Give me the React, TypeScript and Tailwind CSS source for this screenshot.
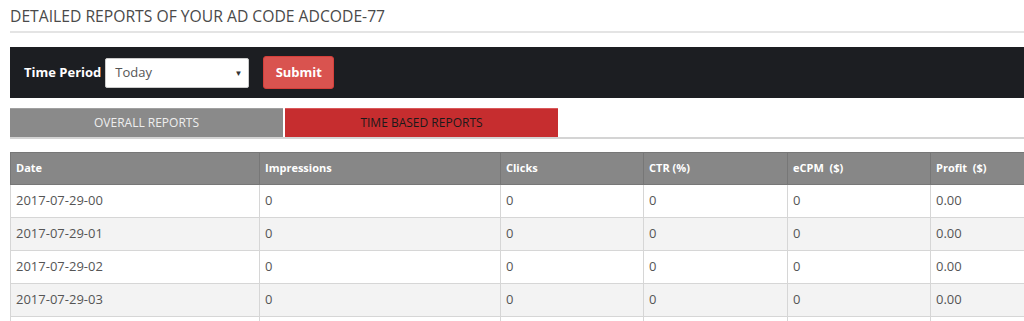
import React from 'react';

const COLUMNS = [
  { label: 'Date', width: 249 },
  { label: 'Impressions', width: 241 },
  { label: 'Clicks', width: 143 },
  { label: 'CTR (%)', width: 144 },
  { label: 'eCPM  ($)', width: 143 },
  { label: 'Profit  ($)', width: 120 },
];

const ROWS = ['00', '01', '02', '03'].map((h) => ({
  date: `2017-07-29-${h}`,
  impressions: '0',
  clicks: '0',
  ctr: '0',
  ecpm: '0',
  profit: '0.00',
}));

export default function App() {
  return (
    <div
      className="w-[1024px] h-[321px] overflow-hidden bg-white"
      style={{ fontFamily: '"Open Sans", "Liberation Sans", sans-serif' }}
    >
      <div className="pl-[10px] w-[1060px]">
        {/* Title */}
        <h2 className="pt-[6px] pb-[4px] text-[15.7px] leading-[21px] font-medium uppercase text-[#4a4a4a] border-b-2 border-[#e4e4e4]">
          Detailed reports of your ad code ADCODE-77
        </h2>

        {/* Filter bar */}
        <div className="mt-[14px] h-[51px] bg-[#1c1e22] flex items-center pl-[14px]">
          <span className="text-[13px] font-bold text-white">Time Period</span>
          <div className="relative ml-[4px] w-[144px] h-[30px] bg-white border border-[#ccc] rounded-[2px] flex items-center pl-[9px]">
            <span className="text-[13px] text-[#555]">Today</span>
            <span className="absolute right-[6px] top-[8px] text-[8px] text-[#333]">▼</span>
          </div>
          <button
            type="button"
            className="ml-[14px] h-[33px] w-[71px] rounded-[3px] bg-[#d9534f] border border-[#d43f3a] text-white text-[13px] font-bold"
          >
            Submit
          </button>
        </div>

        {/* Tabs */}
        <div className="mt-[10px] flex border-b-2 border-[#d4d4d4]">
          <div className="w-[273px] h-[29px] bg-[#8a8a8a] border-t border-[#a0a0a0] flex items-center justify-center text-[12px] uppercase text-[#eee]">
            Overall reports
          </div>
          <div className="ml-[2px] w-[273px] h-[29px] bg-[#c62d2f] border-t border-[#d9585a] flex items-center justify-center text-[12px] uppercase text-[#1a1a1a]">
            Time based reports
          </div>
        </div>

        {/* Table */}
        <table className="mt-[13px] table-fixed border-collapse">
          <thead>
            <tr className="bg-[#878787]">
              {COLUMNS.map((c) => (
                <th
                  key={c.label}
                  style={{ width: c.width }}
                  className="h-[32px] border border-[#777] px-[5px] text-left text-[11px] font-bold text-white whitespace-pre"
                >
                  {c.label}
                </th>
              ))}
            </tr>
          </thead>
          <tbody>
            {ROWS.map((r, i) => (
              <tr key={r.date} className={i % 2 === 0 ? 'bg-white' : 'bg-[#f3f3f3]'}>
                {[r.date, r.impressions, r.clicks, r.ctr, r.ecpm, r.profit].map((v, j) => (
                  <td
                    key={j}
                    className="h-[33px] border border-[#d6d6d6] px-[5px] text-[13px] text-[#555]"
                  >
                    {v}
                  </td>
                ))}
              </tr>
            ))}
            <tr className="bg-white">
              {COLUMNS.map((c) => (
                <td key={c.label} className="h-[33px] border border-[#d6d6d6]" />
              ))}
            </tr>
          </tbody>
        </table>
      </div>
    </div>
  );
}
